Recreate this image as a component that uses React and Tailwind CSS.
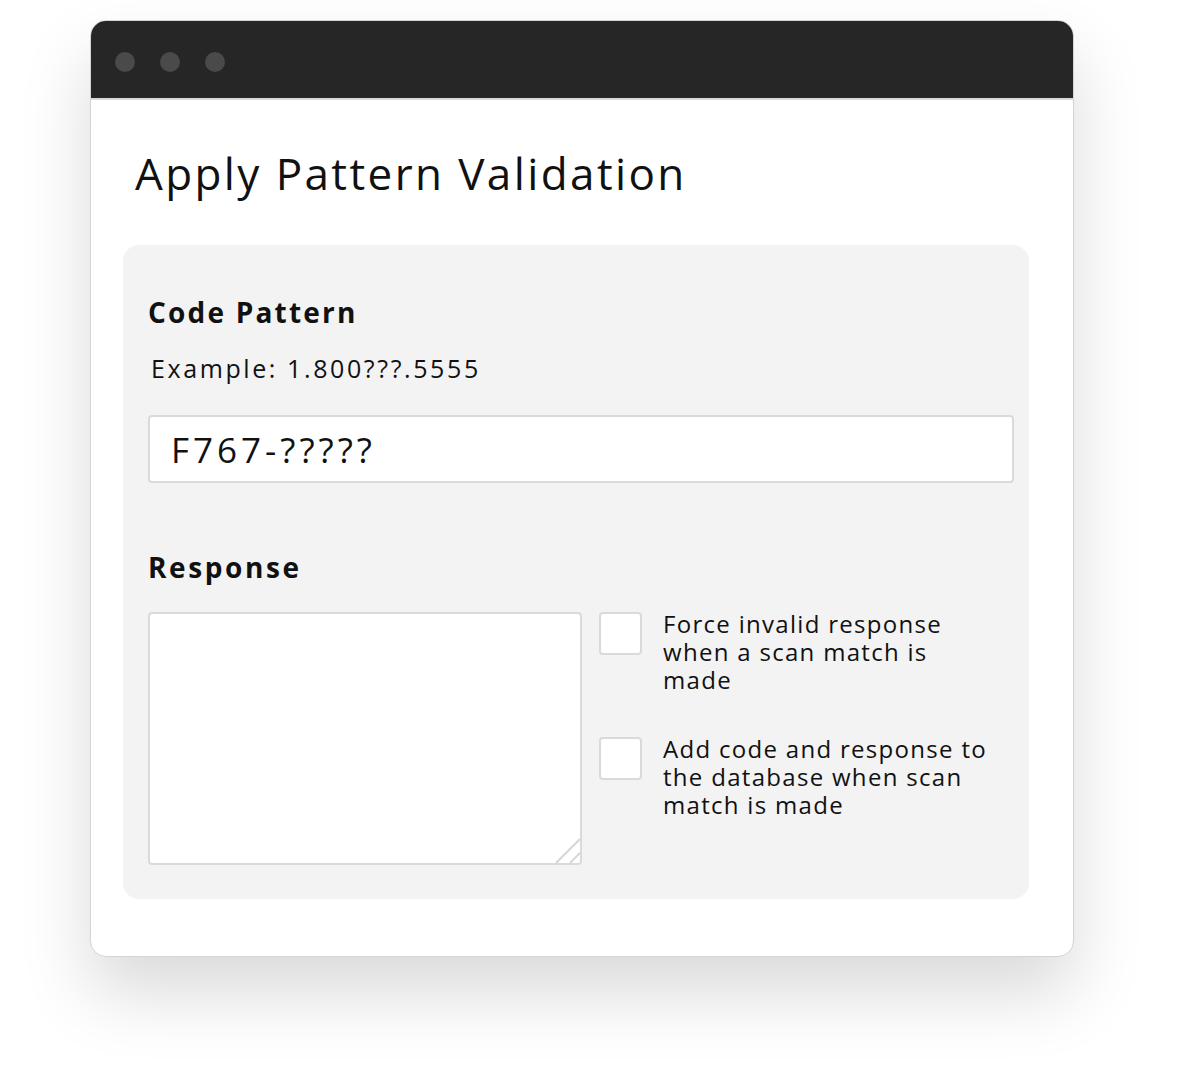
export default function App() {
  const checks = [
    "Force invalid response when a scan match is made",
    "Add code and response to the database when scan match is made",
  ];

  return (
    <div className="min-h-[1082px] bg-white pt-5 pl-[90px] font-['Open_Sans',sans-serif] text-[#111]">
      <div className="flex h-[937px] w-[984px] flex-col overflow-hidden rounded-2xl border border-[#d4d4d4] bg-white shadow-[0_36px_70px_rgba(0,0,0,0.15)]">
        {/* title bar */}
        <div className="flex h-[79px] shrink-0 gap-[25px] border-b-2 border-[#d9d9d9] bg-[#262626] pl-6 pt-[31px]">
          <span className="h-5 w-5 rounded-full bg-[#4a4a4a]" />
          <span className="h-5 w-5 rounded-full bg-[#4a4a4a]" />
          <span className="h-5 w-5 rounded-full bg-[#4a4a4a]" />
        </div>

        <div className="pl-8 pt-[47px]">
          <h1 className="pl-3 text-[44px] leading-[52px] font-normal tracking-[2.4px]">Apply Pattern Validation</h1>

          <div className="mt-[46px] h-[654px] w-[906px] rounded-2xl bg-[#f3f3f3] pl-[25px] pt-[50px]">
            <h2 className="text-[28px] leading-[34px] font-bold tracking-[2.2px]">Code Pattern</h2>
            <p className="mt-[23px] pl-[3px] text-[25px] leading-[32px] tracking-[2.6px]">Example: 1.800???.5555</p>

            <input
              type="text"
              defaultValue="F767-?????"
              className="mt-[31px] h-[68px] w-[866px] rounded border-2 border-[#dadada] bg-white px-[21px] text-[35px] tracking-[4px] text-[#111] outline-none"
            />

            <h2 className="mt-[67px] text-[28px] leading-[34px] font-bold tracking-[2.6px]">Response</h2>

            <div className="mt-[28px] flex">
              <div className="relative h-[253px] w-[434px]">
                <textarea className="block h-full w-full resize-none rounded border-2 border-[#dadada] bg-white outline-none" />
                <svg className="absolute right-0 bottom-0" width="28" height="28" viewBox="0 0 28 28">
                  <line x1="2" y1="26" x2="26" y2="2" stroke="#d6d6d6" strokeWidth="2" />
                  <line x1="16" y1="26" x2="26" y2="16" stroke="#d6d6d6" strokeWidth="2" />
                </svg>
              </div>

              <div className="ml-[17px] flex flex-col gap-[43px]">
                {checks.map((t) => (
                  <div key={t} className="flex items-start">
                    <span className="h-[43px] w-[43px] shrink-0 rounded border-2 border-[#dadada] bg-white" />
                    <p className="-mt-0.5 ml-[21px] w-[335px] text-[24px] leading-[28px] font-medium tracking-[1.3px]">{t}</p>
                  </div>
                ))}
              </div>
            </div>
          </div>
        </div>
      </div>
    </div>
  );
}
